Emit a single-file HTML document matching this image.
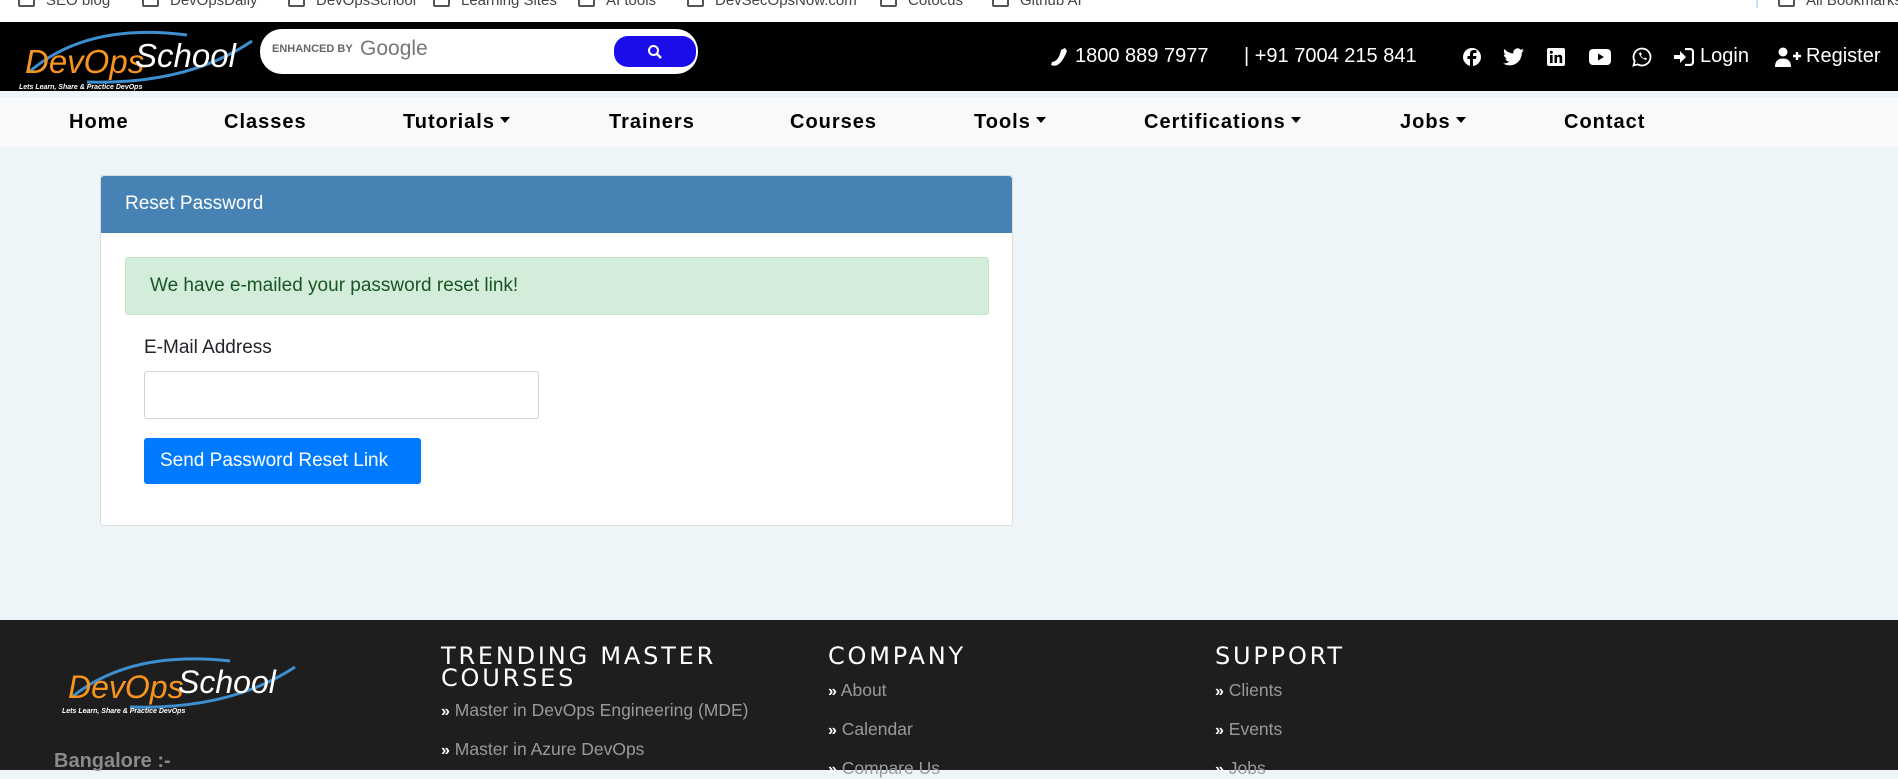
<!DOCTYPE html>
<html><head><meta charset="utf-8"><style>
*{box-sizing:border-box;margin:0;padding:0}
body{width:1898px;height:770px;overflow:hidden;background:#eef5f9;font-family:"Liberation Sans",sans-serif;position:relative}
.abs{position:absolute}
.bm{top:0;height:22px;width:1898px;background:#fff}
.bm span{position:absolute;top:-8px;font-size:15px;color:#444;white-space:nowrap}
.bm i{position:absolute;top:-6px;width:17px;height:13px;border:2px solid #555;border-radius:2px}
.hdr{top:22px;left:0;width:1898px;height:69px;background:#000}
.nav{top:91px;left:0;width:1898px;height:56px;background:#f8f9fa;border-top:6px solid #eef4f8}
.nav a{position:absolute;top:14px;font-weight:bold;font-size:20px;letter-spacing:1px;color:#000;text-decoration:none}
.car{display:inline-block;border-left:5px solid transparent;border-right:5px solid transparent;border-top:6px solid #000;vertical-align:middle;margin-left:5px;margin-top:-6px}
.ht{color:#fff;font-size:20px;top:45px;white-space:nowrap}
.card{left:100px;top:175px;width:913px;height:351px;background:#fff;border:1px solid #dcdcdc;border-radius:3px}
.ch{height:57px;background:#4682b4;color:#fff;font-size:19px;padding:17px 0 0 24px;border-radius:3px 3px 0 0}
.footer{top:620px;left:0;width:1898px;height:150px;background:#1e1e1e}
.fh{color:#fff;font-family:"DejaVu Sans",sans-serif;font-size:24px;letter-spacing:2.8px;line-height:22px}
.fl{color:#9a9a9a;font-size:17.5px;white-space:nowrap}
.fl b{color:#fff;font-size:16px}
</style></head><body>
<div class="abs bm">
<i style="left:18px"></i><span style="left:46px">SEO blog</span>
<i style="left:142px"></i><span style="left:170px">DevOpsDaily</span>
<i style="left:288px"></i><span style="left:316px">DevOpsSchool</span>
<i style="left:433px"></i><span style="left:461px">Learning Sites</span>
<i style="left:578px"></i><span style="left:606px">AI tools</span>
<i style="left:687px"></i><span style="left:715px">DevSecOpsNow.com</span>
<i style="left:880px"></i><span style="left:908px">Cotocus</span>
<i style="left:992px"></i><span style="left:1020px">Github AI</span>
<div class="abs" style="left:1756px;top:0;width:2px;height:8px;background:#cfe0f5"></div>
<i style="left:1778px"></i><span style="left:1806px">All Bookmarks</span>
</div>
<div class="abs hdr">
<svg class="abs" style="left:17px;top:5px" width="240" height="64" viewBox="0 0 240 64">
<path d="M12 45 Q70 -5 170 8" stroke="#3d8fd0" stroke-width="3" fill="none"/>
<path d="M70 55 Q170 58 235 14" stroke="#3d8fd0" stroke-width="3" fill="none"/>
<text x="8" y="46" font-family="Liberation Sans" font-style="italic" font-size="33" fill="#f7941d">DevOps</text>
<text x="118" y="40" font-family="Liberation Sans" font-style="italic" font-size="33" fill="#fff">School</text>
<text x="2" y="62" font-family="Liberation Sans" font-style="italic" font-weight="bold" font-size="7" fill="#fff">Lets Learn, Share &amp; Practice DevOps</text>
</svg>
<div class="abs" style="left:260px;top:7px;width:438px;height:45px;background:#fff;border-radius:22px">
<span class="abs" style="left:12px;top:14px;font-size:11px;font-weight:bold;color:#666">ENHANCED BY</span>
<span class="abs" style="left:100px;top:8px;font-size:21px;color:#777">Google</span>
<div class="abs" style="left:354px;top:7px;width:82px;height:31px;background:#1a0dea;border-radius:14px">
<svg class="abs" style="left:33px;top:8px" width="16" height="16" viewBox="0 0 16 16"><circle cx="6.5" cy="6.5" r="4.5" stroke="#fff" stroke-width="2" fill="none"/><path d="M10 10l4 4" stroke="#fff" stroke-width="2.5"/></svg>
</div></div>
<svg class="abs" style="left:1050px;top:25px" width="18" height="20" viewBox="0 0 18 20"><path d="M15 1 L17 4 Q10 22 1 18 L2 15 Q9 14 11 3 Z" fill="#fff"/></svg>
<span class="abs ht" style="left:1075px;top:23px">1800 889 7977</span>
<span class="abs ht" style="left:1244px;top:23px">| +91 7004 215 841</span>
<svg class="abs" style="left:1462px;top:25px" width="20" height="20" viewBox="0 0 20 20"><circle cx="10" cy="10" r="9" fill="#fff"/><path d="M11 20V12h3l.5-3H11V7.5c0-1 .4-1.5 1.5-1.5H14.5V3.2c-.5-.1-1.5-.2-2.5-.2-2.3 0-4 1.3-4 4V9H5.5v3H8v8z" fill="#000"/></svg>
<svg class="abs" style="left:1503px;top:26px" width="21" height="18" viewBox="0 0 24 20"><path d="M24 2.4c-.9.4-1.8.6-2.8.8 1-.6 1.800-1.6 2.2-2.7-1 .6-2 1-3.1 1.2A4.9 4.9 0 0 0 11.9 6 14 14 0 0 1 1.7.9a4.9 4.9 0 0 0 1.5 6.6c-.8 0-1.6-.3-2.200-.6 0 2.4 1.7 4.4 3.9 4.8-.7.2-1.5.2-2.2.1.6 2 2.4 3.4 4.6 3.4A9.9 9.9 0 0 1 0 17.3 14 14 0 0 0 7.5 19.5c9 0 14-7.5 14-14v-.6c1-.7 1.8-1.6 2.5-2.5z" fill="#fff"/></svg>
<svg class="abs" style="left:1547px;top:26px" width="18" height="18" viewBox="0 0 18 18"><rect width="18" height="18" rx="2" fill="#fff"/><rect x="3" y="7" width="2.6" height="8" fill="#000"/><circle cx="4.3" cy="4.3" r="1.5" fill="#000"/><path d="M7.5 7h2.5v1.2c.5-.9 1.5-1.4 2.6-1.4 2 0 2.6 1.3 2.6 3.2V15h-2.6v-4.4c0-1-.2-1.8-1.2-1.8s-1.4.8-1.4 1.8V15H7.5z" fill="#000"/></svg>
<svg class="abs" style="left:1589px;top:27px" width="22" height="16" viewBox="0 0 22 16"><rect width="22" height="16" rx="4" fill="#fff"/><path d="M9 4.5v7l6-3.5z" fill="#000"/></svg>
<svg class="abs" style="left:1632px;top:25px" width="20" height="20" viewBox="0 0 20 20"><path d="M10 1.5a8.5 8.5 0 0 0-7.3 12.8L1.5 18.5l4.3-1.1A8.5 8.5 0 1 0 10 1.5z" stroke="#fff" stroke-width="1.8" fill="none"/><path d="M7 6c.5 3 3 6 7 7l1-1.5-2-1-1 1c-1.5-.7-2.5-1.7-3.2-3.2l1-1-1-2z" fill="#fff"/></svg>
<svg class="abs" style="left:1674px;top:26px" width="20" height="18" viewBox="0 0 20 18"><path d="M0 7h6V3l6 6-6 6v-4H0z" fill="#fff"/><path d="M11 1h5a3 3 0 0 1 3 3v10a3 3 0 0 1-3 3h-5" stroke="#fff" stroke-width="2.2" fill="none"/></svg>
<span class="abs ht" style="left:1700px;top:23px">Login</span>
<svg class="abs" style="left:1775px;top:25px" width="26" height="20" viewBox="0 0 26 20"><circle cx="8" cy="5" r="4.5" fill="#fff"/><path d="M0 20c0-6 3-8.5 8-8.5s8 2.5 8 8.5z" fill="#fff"/><path d="M18 9h8M22 5v8" stroke="#fff" stroke-width="2.4"/></svg>
<span class="abs ht" style="left:1806px;top:23px">Register</span>
</div>
<div class="abs nav">
<a style="left:69px">Home</a><a style="left:224px">Classes</a><a style="left:403px">Tutorials<span class="car"></span></a><a style="left:609px">Trainers</a><a style="left:790px">Courses</a><a style="left:974px">Tools<span class="car"></span></a><a style="left:1144px">Certifications<span class="car"></span></a><a style="left:1400px">Jobs<span class="car"></span></a><a style="left:1564px">Contact</a>
</div>
<div class="abs card">
<div class="ch">Reset Password</div>
<div class="abs" style="left:24px;top:81px;width:864px;height:58px;background:#d4edda;border:1px solid #c3e6cb;border-radius:3px;color:#155724;font-size:19px;padding:17px 0 0 24px">We have e-mailed your password reset link!</div>
<div class="abs" style="left:43px;top:161px;font-size:19px;color:#212529">E-Mail Address</div>
<div class="abs" style="left:43px;top:195px;width:395px;height:48px;border:1px solid #ced4da;border-radius:3px;background:#fff"></div>
<div class="abs" style="left:43px;top:262px;width:277px;height:46px;background:#007bff;border-radius:3px;color:#fff;font-size:19px;padding:12px 0 0 16px">Send Password Reset Link</div>
</div>
<div class="abs footer">
<svg class="abs" style="left:50px;top:35px" width="260" height="60" viewBox="0 0 240 60">
<path d="M12 42 Q70 -5 170 6" stroke="#3d8fd0" stroke-width="3" fill="none"/>
<path d="M70 52 Q170 55 235 12" stroke="#3d8fd0" stroke-width="3" fill="none"/>
<text x="8" y="43" font-family="Liberation Sans" font-style="italic" font-size="32" fill="#f7941d">DevOps</text>
<text x="118" y="38" font-family="Liberation Sans" font-style="italic" font-size="32" fill="#fff">School</text>
<text x="2" y="58" font-family="Liberation Sans" font-style="italic" font-weight="bold" font-size="7" fill="#fff">Lets Learn, Share &amp; Practice DevOps</text>
</svg>
<div class="abs" style="left:54px;top:130px;font-size:20px;font-weight:bold;color:#8a8a8a">Bangalore :-</div>
<div class="abs fh" style="left:441px;top:25px">TRENDING MASTER<br>COURSES</div>
<div class="abs fl" style="left:441px;top:80px"><b>»</b> Master in DevOps Engineering (MDE)</div>
<div class="abs fl" style="left:441px;top:119px"><b>»</b> Master in Azure DevOps</div>
<div class="abs fh" style="left:828px;top:25px">COMPANY</div>
<div class="abs fl" style="left:828px;top:60px"><b>»</b> About</div>
<div class="abs fl" style="left:828px;top:99px"><b>»</b> Calendar</div>
<div class="abs fl" style="left:828px;top:138px"><b>»</b> Compare Us</div>
<div class="abs fh" style="left:1215px;top:25px">SUPPORT</div>
<div class="abs fl" style="left:1215px;top:60px"><b>»</b> Clients</div>
<div class="abs fl" style="left:1215px;top:99px"><b>»</b> Events</div>
<div class="abs fl" style="left:1215px;top:138px"><b>»</b> Jobs</div>
</div>
</body></html>
